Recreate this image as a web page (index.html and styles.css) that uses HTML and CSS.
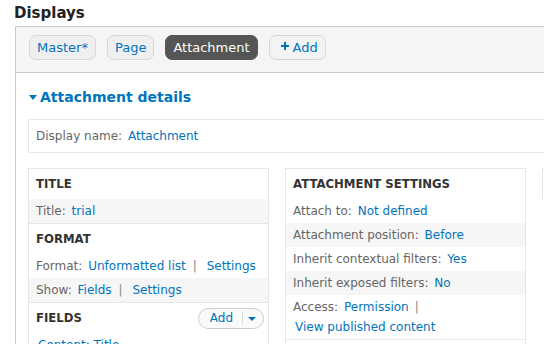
FILE: index.html
```html
<!DOCTYPE html>
<html lang="en">
  <head>
    <meta charset="UTF-8" />
    <title>Displays</title>
    <link rel="stylesheet" href="styles.css">
  </head>
  <body>
    <h2 class="page-title">Displays</h2>

    <div class="displays">
      <div class="tabs">
        <a class="tab" href="#">Master*</a>
        <a class="tab" href="#">Page</a>
        <a class="tab active" href="#">Attachment</a>
        <a class="tab add-tab" href="#">
          <svg class="plus" width="8" height="8" viewBox="0 0 8 8">
            <path d="M3 0h2v3h3v2h-3v3h-2v-3h-3v-2h3z" fill="#0074bd" />
          </svg>Add
        </a>
      </div>

      <div class="display-body">
        <div class="details-title">
          <span class="caret"></span>Attachment details
        </div>

        <div class="display-name">
          <span class="label">Display name:</span>
          <a href="#">Attachment</a>
        </div>

        <div class="columns">
          <div class="column">
            <div class="section">
              <div class="section-title">TITLE</div>
              <div class="row odd">
                <span class="label">Title:</span> <a href="#">trial</a>
              </div>
            </div>
            <div class="section">
              <div class="section-title">FORMAT</div>
              <div class="row">
                <span class="label">Format:</span> <a href="#">Unformatted list</a><span class="sep">|</span> <a href="#">Settings</a>
              </div>
              <div class="row odd">
                <span class="label">Show:</span> <a href="#">Fields</a><span class="sep">|</span> <a href="#">Settings</a>
              </div>
            </div>
            <div class="section">
              <div class="section-title with-button">
                FIELDS
                <span class="dropbutton">
                  <a href="#">Add</a>
                  <span class="drop-toggle"></span>
                </span>
              </div>
              <div class="row">
                <a class="field-link" href="#">Content: Title</a>
              </div>
            </div>
          </div>

          <div class="column">
            <div class="section">
              <div class="section-title">ATTACHMENT SETTINGS</div>
              <div class="row">
                <span class="label">Attach to:</span> <a href="#">Not defined</a>
              </div>
              <div class="row odd">
                <span class="label">Attachment position:</span> <a href="#">Before</a>
              </div>
              <div class="row">
                <span class="label">Inherit contextual filters:</span> <a href="#">Yes</a>
              </div>
              <div class="row odd">
                <span class="label">Inherit exposed filters:</span> <a href="#">No</a>
              </div>
              <div class="row">
                <span class="label">Access:</span> <a href="#">Permission</a><span class="sep access-sep">|</span> <a class="nowrap" href="#">View published content</a>
              </div>
            </div>
            <div class="section">
              <div class="section-title">&nbsp;</div>
            </div>
          </div>

          <div class="column">
            <div class="section">
              <div class="section-title">&nbsp;</div>
            </div>
          </div>
        </div>
      </div>
    </div>
  </body>
</html>
```

FILE: styles.css
```css
body {
  font-family: "DejaVu Sans", sans-serif;
  font-size: 12px;
  color: #666;
  margin: 0;
  overflow: hidden;
}

a {
  color: #0074bd;
  text-decoration: none;
}

.page-title {
  font-size: 15px;
  line-height: 18px;
  color: #222;
  margin: 4px 0 0 14px;
}

.displays {
  margin: 4px 0 0 15px;
  width: 620px;
  border: 1px solid #ccc;
  border-right: none;
}

.tabs {
  display: flex;
  gap: 11px;
  padding: 8px 13px 12px;
  background-color: #f5f5f5;
  border-bottom: 1px solid #ccc;
}

.tab {
  display: block;
  padding: 3px 7px;
  line-height: 17px;
  font-size: 13px;
  background-color: #efefef;
  border: 1px solid #d8d8d8;
  border-radius: 7px;
}

.tab.active {
  background-color: #555;
  border-color: #555;
  color: #fff;
}

.add-tab {
  padding: 3px 7px 3px 11px;
  background-color: #f3f3f3;
}

.plus {
  margin-right: 4px;
  vertical-align: 2px;
}

.display-body {
  padding: 16px 12px 0;
}

.details-title {
  font-size: 14px;
  line-height: 16px;
  font-weight: bold;
  color: #0074bd;
  margin-bottom: 14px;
  display: flex;
  align-items: center;
}

.caret {
  width: 0;
  height: 0;
  border-left: 4px solid transparent;
  border-right: 4px solid transparent;
  border-top: 5px solid #0074bd;
  margin: 1px 3px 0 1px;
}

.display-name {
  border: 1px solid #e8e8e8;
  padding: 8px 7px;
  line-height: 16px;
  margin-bottom: 15px;
}

.label {
  margin-right: 2px;
}

.columns {
  display: flex;
  gap: 16px;
  align-items: flex-start;
}

.column {
  width: 241px;
  flex-shrink: 0;
  box-sizing: border-box;
  border: 1px solid #e6e6e6;
  border-bottom: none;
}

.section + .section {
  border-top: 1px solid #e6e6e6;
}

.section-title {
  padding: 7px;
  line-height: 16px;
  font-size: 11.7px;
  font-weight: bold;
  color: #333;
}

.with-button {
  display: flex;
  justify-content: space-between;
  align-items: center;
  padding-right: 4px;
}

.row {
  padding: 2px 7px;
  line-height: 20px;
}

.row.odd {
  background-color: #f6f6f6;
}

.sep {
  color: #888;
  margin: 0 6px 0 7px;
}

.access-sep {
  margin-left: 6px;
}

.nowrap {
  white-space: nowrap;
  margin-left: 2px;
}

.field-link {
  margin-left: 2px;
}

.dropbutton {
  display: flex;
  align-items: center;
  height: 19px;
  border: 1px solid #ccc;
  border-radius: 11px;
  background-color: #fafafa;
  margin: -3px 0;
  font-weight: normal;
  font-size: 12px;
}

.dropbutton a {
  padding: 0 9px 0 11px;
  line-height: 13px;
  border-right: 1px solid #ddd;
}

.drop-toggle {
  width: 0;
  height: 0;
  border-left: 4px solid transparent;
  border-right: 4px solid transparent;
  border-top: 4px solid #0074bd;
  margin: 1px 7px 0 5px;
}
```
